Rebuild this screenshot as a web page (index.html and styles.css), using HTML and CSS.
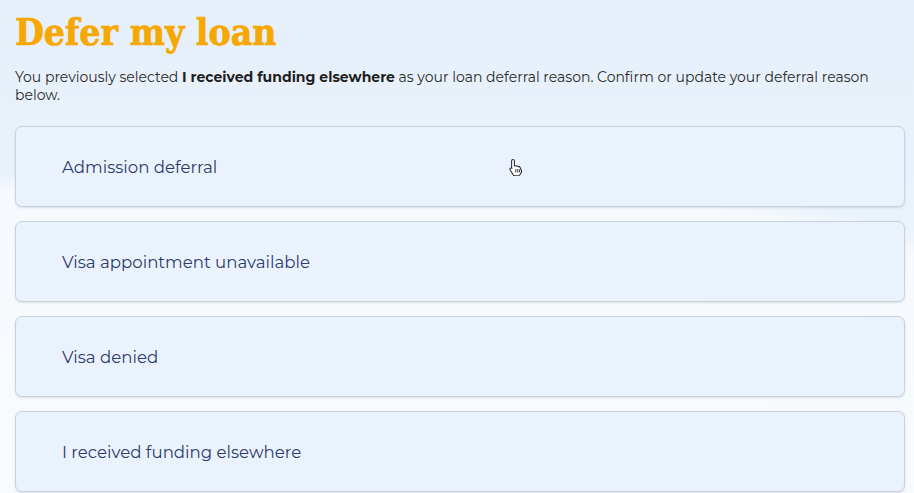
FILE: index.html
```html
<!DOCTYPE html>
<html lang="en">
<head>
<meta charset="utf-8">
<title>Defer my loan</title>
<link rel="stylesheet" href="styles.css">
</head>
<body>
<main class="page">
  <h1 class="title">Defer my loan</h1>
  <p class="intro">You previously selected <strong>I received funding elsewhere</strong> as your loan deferral reason. Confirm or update your deferral reason below.</p>
  <ul class="options">
    <li class="option">Admission deferral
      <svg class="cursor" width="16" height="18" viewBox="0 0 16 18" aria-hidden="true">
        <path d="M5 1.5c.8 0 1.4.6 1.4 1.4V8l.6-.2c.6-.2 1.3 0 1.6.5.6-.3 1.3-.1 1.7.4.6-.3 1.4 0 1.7.6l1.2 2.6c.5 1.1.4 2.4-.3 3.4l-1 1.4c-.5.7-1.3 1.1-2.2 1.1H7.3c-.8 0-1.6-.4-2.1-1L2.2 12c-.5-.6-.4-1.4.2-1.8.5-.4 1.2-.3 1.600.2l-.4-.4V2.9c0-.8.6-1.4 1.4-1.4z" fill="#fff" stroke="#333" stroke-width="1.1" stroke-linejoin="round"/>
        <path d="M7.8 11.5v2.5M9.8 11.5v2.5M11.6 11.8v2.2" stroke="#333" stroke-width="1" stroke-linecap="round"/>
      </svg>
    </li>
    <li class="option">Visa appointment unavailable</li>
    <li class="option">Visa denied</li>
    <li class="option">I received funding elsewhere</li>
  </ul>
</main>
</body>
</html>
```
FILE: styles.css
```css
html, body {
  margin: 0;
  padding: 0;
}
body {
  width: 914px;
  height: 493px;
  overflow: hidden;
  background:
    radial-gradient(ellipse 1300px 420px at 300px 470px, #f8fbfe 0%, #f6f9fd 70%, rgba(246,249,253,0) 74%),
    linear-gradient(180deg, #e6f0fa 0%, #eaf2fb 40%, #eef5fc 100%);
  font-family: "Montserrat", "Noto Sans", "Liberation Sans", sans-serif;
}
.page {
  padding: 6px 9px 0 15px;
}
.title {
  margin: 0;
  font-family: "DejaVu Serif Condensed", "DejaVu Serif", "Liberation Serif", serif;
  font-weight: 700;
  font-size: 37px;
  line-height: 52px;
  color: #f6a800;
  -webkit-text-stroke: 0.7px #f6a800;
}
.intro {
  margin: 10px 0 0;
  font-size: 14px;
  line-height: 18px;
  color: #2b2b2b;
  max-width: 870px;
}
.intro strong {
  font-weight: 700;
  color: #1f1f1f;
}
.options {
  list-style: none;
  margin: 22px 0 0;
  padding: 0;
  display: flex;
  flex-direction: column;
  gap: 14px;
}
.option {
  position: relative;
  height: 81px;
  box-sizing: border-box;
  display: flex;
  align-items: center;
  padding-left: 46px;
  background: #eaf3fd;
  border: 1.5px solid #c9d1dc;
  border-radius: 7px;
  box-shadow: 0 1px 2px rgba(60, 80, 110, 0.15);
  font-size: 16.6px;
  color: #2e3b6c;
}
.cursor {
  position: absolute;
  left: 492px;
  top: 31px;
}
```
